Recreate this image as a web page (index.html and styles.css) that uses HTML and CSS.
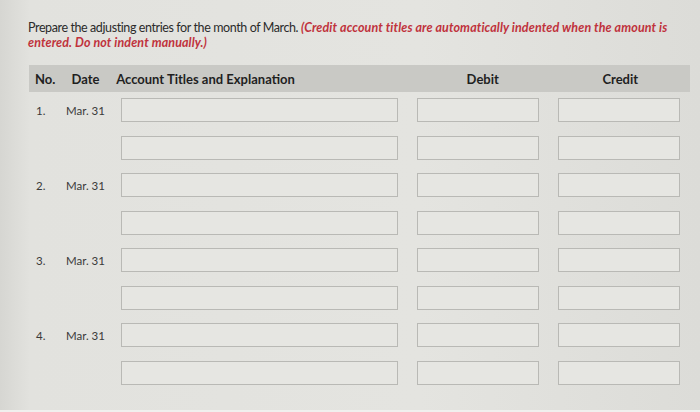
FILE: index.html
```html
<!DOCTYPE html>
<html>
<head>
<meta charset="utf-8">
<link rel="stylesheet" href="styles.css">
</head>
<body>
<div class="page">
  <p class="prompt">Prepare the adjusting entries for the month of March. <em class="note">(Credit account titles are automatically indented when the amount is</em><br><em class="note">entered. Do not indent manually.)</em></p>
  <div class="table">
    <div class="head">
      <span class="h-no">No.</span>
      <span class="h-date">Date</span>
      <span class="h-acct">Account Titles and Explanation</span>
      <span class="h-amt">Debit</span>
      <span class="h-amt">Credit</span>
    </div>
    <div class="rows">
      <div class="row"><span class="no">1.</span><span class="date">Mar. 31</span><div class="cells"><div class="box acct"></div><div class="box amt"></div><div class="box amt"></div></div></div>
      <div class="row"><span class="no"></span><span class="date"></span><div class="cells"><div class="box acct"></div><div class="box amt"></div><div class="box amt"></div></div></div>
      <div class="row"><span class="no">2.</span><span class="date">Mar. 31</span><div class="cells"><div class="box acct"></div><div class="box amt"></div><div class="box amt"></div></div></div>
      <div class="row"><span class="no"></span><span class="date"></span><div class="cells"><div class="box acct"></div><div class="box amt"></div><div class="box amt"></div></div></div>
      <div class="row"><span class="no">3.</span><span class="date">Mar. 31</span><div class="cells"><div class="box acct"></div><div class="box amt"></div><div class="box amt"></div></div></div>
      <div class="row"><span class="no"></span><span class="date"></span><div class="cells"><div class="box acct"></div><div class="box amt"></div><div class="box amt"></div></div></div>
      <div class="row"><span class="no">4.</span><span class="date">Mar. 31</span><div class="cells"><div class="box acct"></div><div class="box amt"></div><div class="box amt"></div></div></div>
      <div class="row"><span class="no"></span><span class="date"></span><div class="cells"><div class="box acct"></div><div class="box amt"></div><div class="box amt"></div></div></div>
    </div>
  </div>
</div>
</body>
</html>
```

FILE: styles.css
```css
html, body {
  margin: 0;
  padding: 0;
}
body {
  width: 700px;
  height: 410px;
  overflow: hidden;
  background: linear-gradient(90deg, #d6d6d2 0px, #e2e2de 30px, #e4e4e0 60%, #dcdcd8 100%);
  border-bottom: 2px solid #f0f0ee;
  font-family: Lato, "Open Sans", sans-serif;
  color: #2b2b2b;
}
.page {
  padding: 20px 10px 0 28px;
}
.prompt {
  margin: 0;
  font-size: 12.5px;
  line-height: 15px;
  width: 660px;
  letter-spacing: -0.4px;
}
.note {
  color: #c0323c;
  font-weight: 700;
  font-style: italic;
  letter-spacing: 0.1px;
}
.table {
  margin-top: 15px;
  margin-left: 1px;
  width: 661px;
}
.head {
  display: flex;
  align-items: center;
  height: 27px;
  background: #c9c9c5;
  font-weight: 700;
  font-size: 13px;
  color: #1f1f1f;
}
.h-no {
  width: 43px;
  padding-left: 6px;
  box-sizing: border-box;
}
.h-date {
  width: 45px;
}
.h-acct {
  width: 300px;
}
.h-amt {
  width: 141px;
  text-align: center;
}
.h-amt:last-child {
  margin-left: -2px;
}
.rows {
  display: flex;
  flex-direction: column;
  gap: 13.5px;
  padding-top: 6px;
}
.row {
  display: flex;
  align-items: center;
  height: 24px;
  font-size: 11.5px;
  color: #3a3a3a;
}
.no {
  width: 37px;
  padding-left: 7px;
  box-sizing: border-box;
}
.date {
  width: 55px;
}
.cells {
  display: flex;
  gap: 19px;
}
.box {
  height: 24px;
  box-sizing: border-box;
  border: 1px solid #b9b9b5;
  background: #e6e6e2;
}
.acct {
  width: 277px;
}
.amt {
  width: 122px;
}
```
